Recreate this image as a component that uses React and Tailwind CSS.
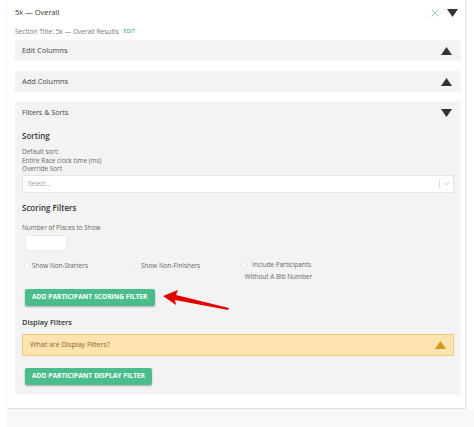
import React from "react";

const font = { fontFamily: '"Open Sans", "Liberation Sans", sans-serif' };

const TriUp = ({ className = "fill-[#333]" }) => (
  <svg width="11" height="8" viewBox="0 0 11 8" className={className}>
    <polygon points="5.5,0 11,8 0,8" />
  </svg>
);

const TriDown = ({ className = "fill-[#333]" }) => (
  <svg width="11" height="8" viewBox="0 0 11 8" className={className}>
    <polygon points="0,0 11,0 5.5,8" />
  </svg>
);

const Radio = () => (
  <span className="w-[6px] h-[6px] rounded-full bg-white border border-[#e6e6e6] inline-block" />
);

const GreenButton = ({ children }) => (
  <button className="bg-[#4bbd8c] text-white font-bold uppercase text-[6.7px] rounded-[2px] shadow-[0_1px_2px_rgba(0,0,0,0.3)] h-[17px] px-[7px] leading-none">
    {children}
  </button>
);

export default function App() {
  return (
    <div className="w-[474px] h-[427px] bg-white relative overflow-hidden text-[#333]" style={font}>
      {/* card */}
      <div className="ml-[7px] w-[459px] bg-white border-b border-r border-[#e3e3e6] shadow-[0_0_2px_rgba(0,0,0,0.08)] pl-[8px] pr-[4px] pb-[13px]">
        <div className="flex items-center justify-between h-[25px] pt-[1px]">
          <span className="text-[7.5px] text-[#333]">5k — Overall</span>
          <div className="flex items-center gap-[8px] pr-[3px]">
            <svg width="8" height="8" viewBox="0 0 8 8" className="stroke-[#9bc6c0]" strokeWidth="0.9">
              <line x1="0.5" y1="0.5" x2="7.5" y2="7.5" />
              <line x1="7.5" y1="0.5" x2="0.5" y2="7.5" />
            </svg>
            <TriDown />
          </div>
        </div>
        <div className="flex items-center gap-[5px] h-[13px] text-[6.6px] text-[#777]">
          <span>Section Title: 5k — Overall Results</span>
          <span className="text-[#3fae8c] text-[5px] font-semibold tracking-[0.3px]">EDIT</span>
        </div>

        <div className="mt-[2px] bg-[#f3f3f3] h-[21px] flex items-center justify-between pl-[7px] pr-[9px]">
          <span className="text-[7.4px] text-[#444]">Edit Columns</span>
          <TriUp />
        </div>
        <div className="mt-[10px] bg-[#f3f3f3] h-[21px] flex items-center justify-between pl-[7px] pr-[9px]">
          <span className="text-[7.4px] text-[#444]">Add Columns</span>
          <TriUp />
        </div>

        <div className="mt-[9px] bg-[#f3f3f3] pl-[7px] pr-[7px] pb-[10px]">
          <div className="h-[23px] flex items-center justify-between pr-[2px]">
            <span className="text-[7.2px] text-[#444]">Filters &amp; Sorts</span>
            <TriDown />
          </div>
          <div className="mt-[6px] text-[8px] font-semibold text-[#333]">Sorting</div>
          <div className="mt-[6px] text-[6.4px] text-[#666] leading-[8.5px]">
            <div>Default sort:</div>
            <div>Entire Race clock time (ms)</div>
            <div>Override Sort</div>
          </div>
          <div className="mt-[1px] h-[18px] bg-white border border-[#e4e4e4] rounded-[2px] flex items-center justify-between pl-[5px]">
            <span className="text-[6.4px] text-[#999]">Select...</span>
            <div className="flex items-center h-full">
              <span className="w-px h-[9px] bg-[#ddd]" />
              <svg width="13" height="8" viewBox="0 0 13 8" className="stroke-[#bbb]" fill="none" strokeWidth="0.8">
                <polyline points="4,2.5 6.5,5 9,2.5" />
              </svg>
            </div>
          </div>

          <div className="mt-[9px] text-[8px] font-semibold text-[#333]">Scoring Filters</div>
          <div className="mt-[9px] text-[6.4px] text-[#666]">Number of Places to Show</div>
          <div className="mt-[3px] ml-[3px] w-[42px] h-[16px] bg-white rounded-[2px] border border-[#ececec]" />

          <div className="mt-[10px] flex text-[6.4px] text-[#666]">
            <div className="w-[111px] flex items-start gap-[2px] pl-[2px]">
              <span className="mt-[2px] flex"><Radio /></span>
              <span>Show Non-Starters</span>
            </div>
            <div className="w-[110px] flex items-start gap-[2px]">
              <span className="mt-[2px] flex"><Radio /></span>
              <span>Show Non-Finishers</span>
            </div>
            <div className="flex flex-col items-end w-[72px] -ml-[3px] leading-[12px] -mt-[2px]">
              <div className="flex items-center gap-[5px] pr-[1px]">
                <Radio />
                <span>Include Participants</span>
              </div>
              <span>Without A Bib Number</span>
            </div>
          </div>

          <div className="mt-[6px] pl-[3px] flex">
            <GreenButton>Add Participant Scoring Filter</GreenButton>
          </div>

          <div className="mt-[11px] text-[7.4px] font-semibold text-[#333]">Display Filters</div>
          <div className="mt-[6px] h-[22px] bg-[#fde3ad] border border-[#f1c97a] rounded-[1px] flex items-center justify-between pl-[7px] pr-[7px]">
            <span className="text-[7px] text-[#8a6327]">What are Display Filters?</span>
            <TriUp className="fill-[#d6961c]" />
          </div>
          <div className="mt-[12px] pl-[3px] flex">
            <GreenButton>Add Participant Display Filter</GreenButton>
          </div>
        </div>
      </div>
      <div className="ml-[7px] h-[20px] bg-[#f8f8fa]" />

      {/* annotation arrow */}
      <svg className="absolute left-0 top-0" width="474" height="427" viewBox="0 0 474 427">
        <polygon points="163,296 178,290 176,295 229,308 228,310 175,300 176,305" fill="#e00000" />
      </svg>
    </div>
  );
}
